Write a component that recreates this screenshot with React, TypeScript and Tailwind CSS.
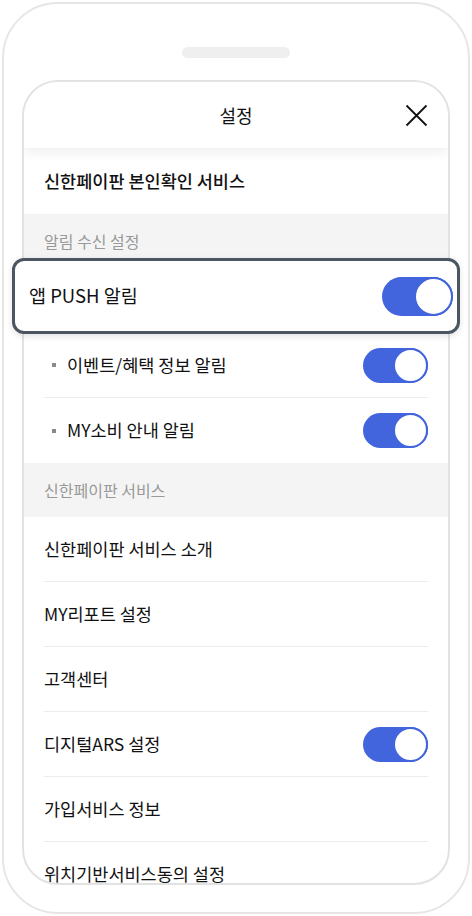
import React from 'react';

const Toggle: React.FC<{ big?: boolean }> = ({ big }) => (
  <div
    className={`flex justify-end rounded-full bg-[#4264dc] ${big ? 'w-[71px] h-[39px]' : 'w-[65px] h-[35px]'}`}
  >
    <div className="h-full aspect-square rounded-full bg-white border-2 border-[#4264dc]" />
  </div>
);

interface RowProps {
  label: string;
  toggle?: boolean;
  bullet?: boolean;
  divider?: boolean;
}

const Row: React.FC<RowProps> = ({ label, toggle, bullet, divider = true }) => (
  <div className="px-[20px]">
    <div
      className={`h-[65px] flex items-center justify-between ${divider ? 'border-b border-[#ececec]' : ''}`}
    >
      <div className="flex items-center">
        {bullet && <span className="ml-[8px] mr-[11px] w-[4px] h-[4px] bg-[#8a8a8a]" />}
        <span className="text-[17.5px] font-normal text-[#111]">{label}</span>
      </div>
      {toggle && <Toggle />}
    </div>
  </div>
);

const Section: React.FC<{ label: string }> = ({ label }) => (
  <div className="h-[54px] bg-[#f4f4f4] px-[20px] flex items-center">
    <span className="text-[16px] text-[#999]">{label}</span>
  </div>
);

export default function App() {
  return (
    <div className="w-[472px] h-[916px] bg-white p-[2px] font-['Noto_Sans_CJK_KR','Noto_Sans',sans-serif]">
      <div className="relative w-full h-[912px] border-2 border-[#e6e6e6] rounded-[56px] flex flex-col">
        {/* speaker */}
        <div className="mt-[43px] self-center w-[108px] h-[11px] rounded-full bg-[#efefef]" />

        {/* screen */}
        <div className="mt-[22px] ml-[18px] w-[428px] h-[805px] border-2 border-[#e2e2e2] rounded-[36px] overflow-hidden">
          <div className="relative z-10 h-[66px] bg-white px-[20px] flex items-center shadow-[0_4px_12px_rgba(0,0,0,0.07)]">
            <div className="w-[23px]" />
            <div className="flex-1 text-center text-[18px] font-normal text-[#111]">설정</div>
            <svg width="23" height="23" viewBox="0 0 23 23" fill="none" stroke="#111" strokeWidth="1.8">
              <path d="M1.5 1.5 L21.5 21.5 M21.5 1.5 L1.5 21.5" />
            </svg>
          </div>

          <div className="h-[66px] px-[20px] flex items-center">
            <span className="text-[17.5px] font-medium text-[#111]">신한페이판 본인확인 서비스</span>
          </div>

          <Section label="알림 수신 설정" />
          <div className="h-[65px]" />
          <Row label="이벤트/혜택 정보 알림" bullet toggle />
          <Row label="MY소비 안내 알림" bullet toggle divider={false} />
          <Section label="신한페이판 서비스" />
          <Row label="신한페이판 서비스 소개" />
          <Row label="MY리포트 설정" />
          <Row label="고객센터" />
          <Row label="디지털ARS 설정" toggle />
          <Row label="가입서비스 정보" />
          <Row label="위치기반서비스동의 설정" divider={false} />
        </div>

        {/* highlighted push card */}
        <div className="absolute left-[8px] top-[254px] w-[448px] h-[76px] bg-white border-[3px] border-[#4b5661] rounded-[12px] pl-[14px] pr-[4px] flex items-center justify-between shadow-[0_2px_6px_rgba(0,0,0,0.12)]">
          <span className="text-[18.5px] font-normal text-[#111]">앱 PUSH 알림</span>
          <Toggle big />
        </div>
      </div>
    </div>
  );
}
